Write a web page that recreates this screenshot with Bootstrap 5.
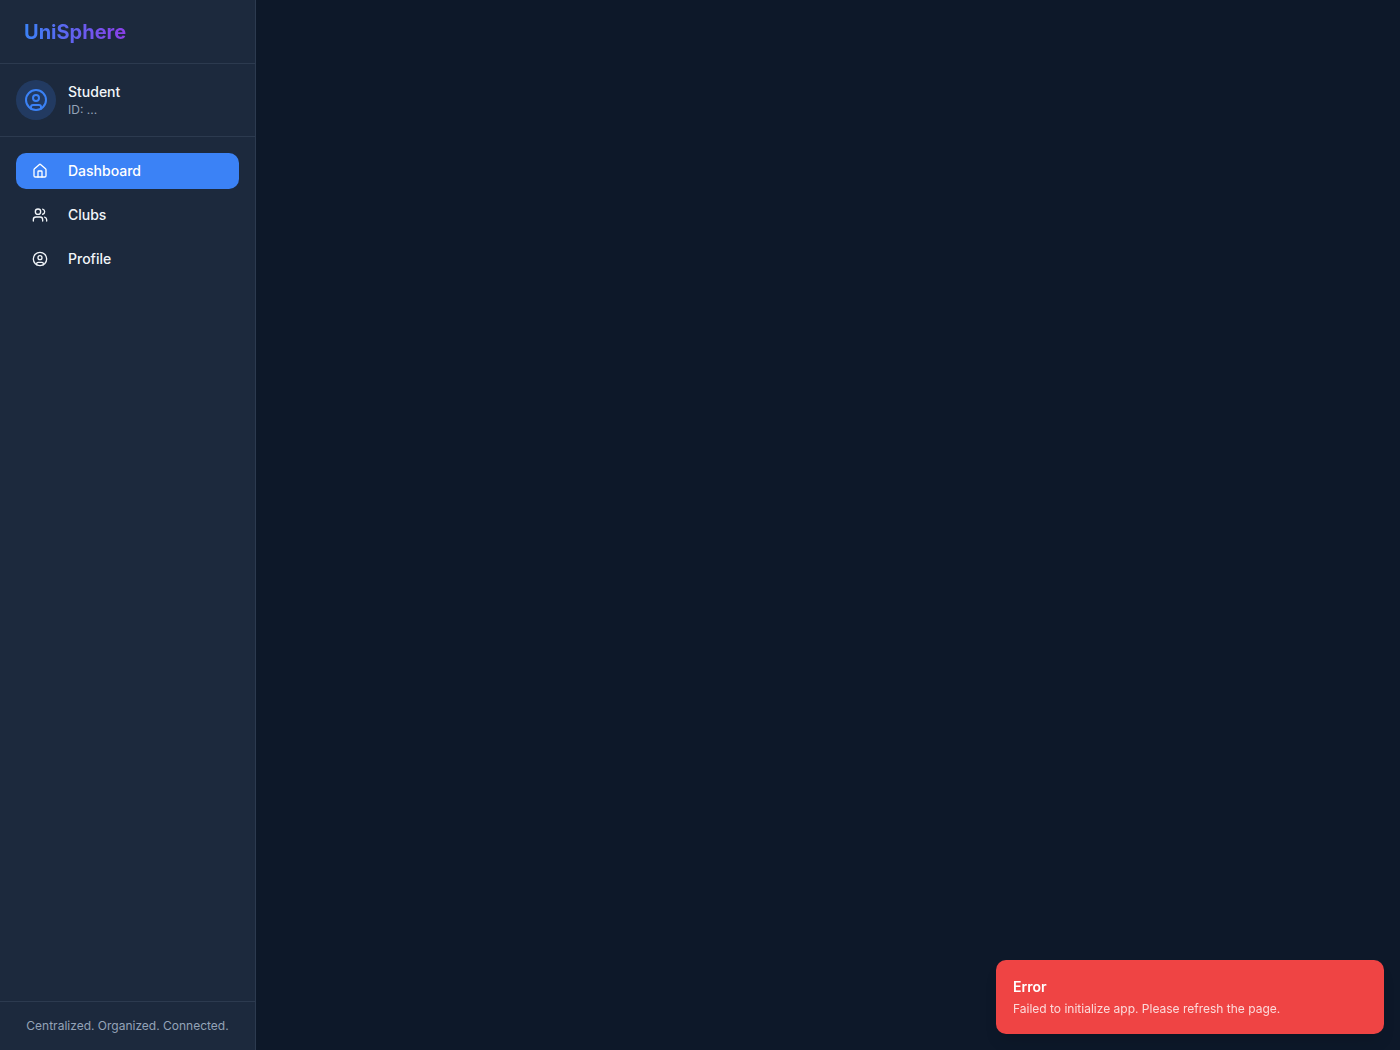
<!DOCTYPE html>
<html lang="en">
<head>
  <meta charset="UTF-8" />
  <title>UniSphere</title>
  <meta name="viewport" content="width=device-width, initial-scale=1" />
  <link href="https://cdn.jsdelivr.net/npm/bootstrap@5.3.0/dist/css/bootstrap.min.css" rel="stylesheet">
  <style>
    body {
      background: #0d1829;
      font-family: Inter, "Liberation Sans", sans-serif;
      color: #f1f5f9;
      height: 1050px;
      overflow: hidden;
    }
    .app-shell { height: 1050px; }
    .side-panel {
      width: 256px;
      flex: 0 0 256px;
      background: #1c293d;
      border-right: 1px solid #2c3a4f;
    }
    .brand-box { height: 64px; padding: 0 24px; border-bottom: 1px solid #2c3a4f; }
    .brand-name {
      font-size: 20px;
      font-weight: 700;
      background: linear-gradient(90deg, #3b82f6, #8b3fe8);
      -webkit-background-clip: text;
      background-clip: text;
      color: transparent;
    }
    .user-box { height: 73px; padding: 0 16px; gap: 12px; border-bottom: 1px solid #2c3a4f; }
    .user-avatar {
      width: 40px;
      height: 40px;
      background: rgba(59, 130, 246, 0.2);
      color: #3b82f6;
    }
    .user-name { font-size: 14px; font-weight: 500; line-height: 20px; color: #f1f5f9; }
    .user-id { font-size: 12px; line-height: 16px; color: #94a3b8; }
    .side-links { padding: 16px; gap: 8px; }
    .side-link {
      height: 36px;
      padding: 0 16px;
      gap: 20px;
      font-size: 14px;
      font-weight: 500;
      line-height: 20px;
      color: #f1f5f9;
      border-radius: 10px;
      text-decoration: none;
    }
    .side-link.is-active { background: #3b82f6; color: #fff; }
    .side-foot {
      height: 49px;
      border-top: 1px solid #2c3a4f;
      font-size: 12px;
      color: #94a3b8;
    }
    .error-toast {
      right: 16px;
      bottom: 16px;
      width: 388px;
      height: 74px;
      padding: 0 17px;
      background: #ef4444;
      color: #fff;
      border-radius: 10px;
      box-shadow: 0 10px 15px -3px rgba(0, 0, 0, 0.1), 0 4px 6px -4px rgba(0, 0, 0, 0.1);
    }
    .toast-head { font-size: 14px; font-weight: 600; line-height: 20px; }
    .toast-text { font-size: 12px; line-height: 16px; margin-top: 4px; opacity: 0.8; }
  </style>
</head>
<body>

<div class="app-shell d-flex">
  <!-- Sidebar -->
  <aside class="side-panel d-flex flex-column">
    <div class="brand-box d-flex align-items-center">
      <span class="brand-name">UniSphere</span>
    </div>
    <div class="user-box d-flex align-items-center">
      <div class="user-avatar rounded-circle d-flex align-items-center justify-content-center">
        <svg width="24" height="24" viewBox="0 0 24 24" fill="none" stroke="currentColor" stroke-width="2" stroke-linecap="round" stroke-linejoin="round"><circle cx="12" cy="12" r="10"/><circle cx="12" cy="10" r="3"/><path d="M7 20.662V19a2 2 0 0 1 2-2h6a2 2 0 0 1 2 2v1.662"/></svg>
      </div>
      <div>
        <div class="user-name">Student</div>
        <div class="user-id">ID: ...</div>
      </div>
    </div>
    <nav class="side-links d-flex flex-column flex-grow-1">
      <a href="#" class="side-link is-active d-flex align-items-center">
        <svg width="16" height="16" viewBox="0 0 24 24" fill="none" stroke="currentColor" stroke-width="2" stroke-linecap="round" stroke-linejoin="round"><path d="M15 21v-8a1 1 0 0 0-1-1h-4a1 1 0 0 0-1 1v8"/><path d="M3 10a2 2 0 0 1 .709-1.528l7-5.999a2 2 0 0 1 2.582 0l7 5.999A2 2 0 0 1 21 10v9a2 2 0 0 1-2 2H5a2 2 0 0 1-2-2z"/></svg>
        <span>Dashboard</span>
      </a>
      <a href="#" class="side-link d-flex align-items-center">
        <svg width="16" height="16" viewBox="0 0 24 24" fill="none" stroke="currentColor" stroke-width="2" stroke-linecap="round" stroke-linejoin="round"><path d="M16 21v-2a4 4 0 0 0-4-4H6a4 4 0 0 0-4 4v2"/><circle cx="9" cy="7" r="4"/><path d="M22 21v-2a4 4 0 0 0-3-3.87"/><path d="M16 3.13a4 4 0 0 1 0 7.75"/></svg>
        <span>Clubs</span>
      </a>
      <a href="#" class="side-link d-flex align-items-center">
        <svg width="16" height="16" viewBox="0 0 24 24" fill="none" stroke="currentColor" stroke-width="2" stroke-linecap="round" stroke-linejoin="round"><circle cx="12" cy="12" r="10"/><circle cx="12" cy="10" r="3"/><path d="M7 20.662V19a2 2 0 0 1 2-2h6a2 2 0 0 1 2 2v1.662"/></svg>
        <span>Profile</span>
      </a>
    </nav>
    <div class="side-foot d-flex align-items-center justify-content-center">Centralized. Organized. Connected.</div>
  </aside>

  <main class="flex-grow-1"></main>
</div>

<!-- Toast -->
<div class="error-toast position-fixed d-flex flex-column justify-content-center">
  <div class="toast-head">Error</div>
  <div class="toast-text">Failed to initialize app. Please refresh the page.</div>
</div>

<script src="https://cdn.jsdelivr.net/npm/bootstrap@5.3.0/dist/js/bootstrap.bundle.min.js"></script>
</body>
</html>
